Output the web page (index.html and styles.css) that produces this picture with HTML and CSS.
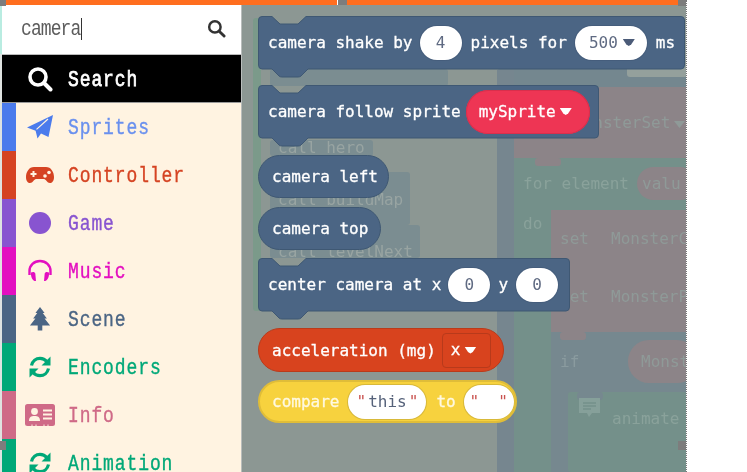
FILE: index.html
```html
<!DOCTYPE html>
<html lang="en">
<head>
<meta charset="utf-8">
<title>Camera blocks</title>
<link rel="stylesheet" href="styles.css">
</head>
<body>
<div class="window">
  <div class="topbar"><div class="bar bar-left"></div><div class="bar-gap"></div><div class="bar bar-right"></div></div>
  <div class="handle handle-tl"></div>
  <div class="handle handle-tr"></div>
  <div class="handle handle-bl"></div>
  <div class="handle handle-br"></div>
  <div class="main">
    <aside class="toolbox">
      <div class="search">
        <span class="query">camera</span><span class="caret"></span>
        <svg class="search-icon" viewBox="0 0 20 20"><circle cx="8.3" cy="8.3" r="6" fill="none" stroke="#333" stroke-width="2.6"/><path d="M12.8 12.8 18 18" stroke="#333" stroke-width="3" stroke-linecap="round"/></svg>
      </div>
      <div class="cat cat-search">
        <span class="cat-icon"><svg viewBox="0 0 26 26" width="26" height="26"><circle cx="11" cy="11" r="8" fill="none" stroke="#fff" stroke-width="3.6"/><path d="M17 17 23.5 23.5" stroke="#fff" stroke-width="4" stroke-linecap="round"/></svg></span>
        <span class="cat-label">Search</span>
      </div>
      <div class="cat sprites">
        <span class="strip"></span>
        <span class="cat-icon"><svg viewBox="0 0 26 26" width="26" height="26"><path d="M26 1 21.5 23 14 19.6 10.5 24.5 8.6 16.8 0 13.6Z" fill="#4b7bec"/><path d="M21 5 9.5 15.4" stroke="#fff3e1" stroke-width="1.2"/></svg></span>
        <span class="cat-label">Sprites</span>
      </div>
      <div class="cat controller">
        <span class="strip"></span>
        <span class="cat-icon"><svg viewBox="0 0 28 18" width="28" height="18"><path d="M8 1H20C25 1 28 6 28 11 28 15 26 17 24 17 21 17 20 13 18 13H10C8 13 7 17 4 17 2 17 0 15 0 11 0 6 3 1 8 1Z" fill="#d54322"/><path d="M7.5 5V11M4.5 8H10.5" stroke="#fff3e1" stroke-width="2"/><circle cx="19" cy="10" r="1.8" fill="#fff3e1"/><circle cx="23" cy="6.5" r="1.8" fill="#fff3e1"/></svg></span>
        <span class="cat-label">Controller</span>
      </div>
      <div class="cat game">
        <span class="strip"></span>
        <span class="cat-icon"><svg viewBox="0 0 24 24" width="24" height="24"><circle cx="12" cy="12" r="11" fill="#8854d0"/></svg></span>
        <span class="cat-label">Game</span>
      </div>
      <div class="cat music">
        <span class="strip"></span>
        <span class="cat-icon"><svg viewBox="0 0 26 24" width="26" height="24"><path d="M2.500 16V12C2.500 6.500 7 2 13 2S23.500 6.500 23.500 12V16" fill="none" stroke="#e30fc0" stroke-width="2.400"/><path d="M4 13.500C6 12.500 8 13 8.300 14.500L9 22C6.500 22.500 3.500 19 4 13.500ZM22 13.500C20 12.500 18 13 17.700 14.500L17 22C19.500 22.500 22.500 19 22 13.500Z" fill="#e30fc0"/></svg></span>
        <span class="cat-label">Music</span>
      </div>
      <div class="cat scene">
        <span class="strip"></span>
        <span class="cat-icon"><svg viewBox="0 0 24 26" width="22" height="26"><path d="M12 0 17 6.500H15L19.500 12.500H17L23 20H14.500V25.500H9.500V20H1L7 12.500H4.500L9 6.500H7Z" fill="#4b6584"/></svg></span>
        <span class="cat-label">Scene</span>
      </div>
      <div class="cat encoders">
        <span class="strip"></span>
        <span class="cat-icon"><svg class="sync" viewBox="0 0 24 24" width="24" height="24"><path d="M3.500 10.500C4.500 6 8 3.300 12 3.300 15 3.300 17.300 4.600 18.800 6.500M20.500 13.500C19.500 18 16 20.700 12 20.700 9 20.700 6.700 19.400 5.200 17.500" fill="none" stroke="currentColor" stroke-width="3.200"/><path d="M22.500 1.500V10.500H13.500ZM1.500 22.500V13.500H10.500Z" fill="currentColor"/></svg></span>
        <span class="cat-label">Encoders</span>
      </div>
      <div class="cat info">
        <span class="strip"></span>
        <span class="cat-icon"><svg viewBox="0 0 30 22" width="30" height="22"><rect width="30" height="22" rx="2.500" fill="#cf6a87"/><circle cx="9.500" cy="7.500" r="3.400" fill="#fff3e1"/><path d="M4 17C4 13 6 12 9.500 12S15 13 15 17Z" fill="#fff3e1"/><path d="M18 6.500H27M18 10.500H27M18 14.500H27" stroke="#fff3e1" stroke-width="1.800"/><path d="M7 22V20.500M11 22V20.500M19 22V20.500M23 22V20.500" stroke="#fff3e1"/></svg></span>
        <span class="cat-label">Info</span>
      </div>
      <div class="cat animation">
        <span class="strip"></span>
        <span class="cat-icon"><svg class="sync" viewBox="0 0 24 24" width="24" height="24"><path d="M3.500 10.500C4.500 6 8 3.300 12 3.300 15 3.300 17.300 4.600 18.800 6.500M20.500 13.500C19.500 18 16 20.700 12 20.700 9 20.700 6.700 19.400 5.200 17.500" fill="none" stroke="currentColor" stroke-width="3.200"/><path d="M22.500 1.500V10.500H13.500ZM1.500 22.500V13.500H10.500Z" fill="currentColor"/></svg></span>
        <span class="cat-label">Animation</span>
      </div>
    </aside>
    <section class="workspace">
      <div class="ghosts">
        <div class="ghost g-strip"></div>
        <div class="ghost g-top"></div>
        <div class="ghost g-topright"></div>
        <div class="ghost g-light"></div>
        <div class="ghost g-hero"></div>
        <div class="ghost g-build"></div>
        <div class="ghost g-level"></div>
        <div class="ghost g-band"></div>
        <div class="ghost g-green"></div>
        <div class="ghost g-mauve"></div>
        <div class="ghost g-tab"></div>
        <div class="ghost g-set"></div>
        <div class="ghost g-if"></div>
        <div class="ghost g-settab"></div>
        <div class="ghost g-inner"></div>
        <div class="ghost g-iftab"></div>
        <div class="ghost g-valu"></div>
        <div class="ghost g-monst"></div>
        <span class="gt t-hero">call hero</span>
        <span class="gt t-build">call buildMap</span>
        <span class="gt t-level">call levelNext</span>
        <span class="gt t-monster">MonsterSet</span>
        <i class="g-tri"></i>
        <span class="gt t-for">for element</span>
        <span class="gt t-valu">valu</span>
        <span class="gt t-do">do</span>
        <span class="gt t-set1">set</span>
        <span class="gt t-mc">MonsterC</span>
        <span class="gt t-set2">set</span>
        <span class="gt t-mp">MonsterP</span>
        <span class="gt t-if">if</span>
        <span class="gt t-mo">Monst</span>
        <span class="gt t-anim">animate</span>
        <svg class="g-comment" viewBox="0 0 21 19"><path d="M0 0H21V15H13L10 19 8 15H0Z" fill="#86a09a"/><path d="M4 5H17M4 8H17M4 11H12" stroke="#74908a" stroke-width="1.300"/></svg>
      </div>
      <div class="flyout">
        <div class="block stack w-shake">
          <svg class="shape" width="427" height="62" viewBox="0 0 427 62"><path d="M4 .5H14L22 8H40L48 .5H423Q426.500 .5 426.500 4V49Q426.500 53 423 53H50L43 60Q42 61 40 61H24Q22 61 21 60L14 53H4Q.5 53 .5 49V4Q.5 .5 4 .5Z"/></svg>
          <div class="row">
            <span>camera shake by</span>
            <span class="field f-4">4</span>
            <span class="t-pixels">pixels for</span>
            <span class="field f-500">500<i class="tri dark"></i></span>
            <span class="t-ms">ms</span>
          </div>
        </div>
        <div class="block stack w-follow">
          <svg class="shape" width="341" height="62" viewBox="0 0 341 62"><path d="M4 .5H14L22 8H40L48 .5H337Q340.500 .5 340.500 4V49Q340.500 53 337 53H50L43 60Q42 61 40 61H24Q22 61 21 60L14 53H4Q.5 53 .5 49V4Q.5 .5 4 .5Z"/></svg>
          <div class="row">
            <span>camera follow sprite</span>
            <span class="sprite-drop">mySprite<i class="tri"></i></span>
          </div>
        </div>
        <div class="block pill w-left">camera left</div>
        <div class="block pill w-top">camera top</div>
        <div class="block stack w-center">
          <svg class="shape" width="312" height="62" viewBox="0 0 312 62"><path d="M4 .5H14L22 8H40L48 .5H308Q311.500 .5 311.500 4V49Q311.500 53 308 53H50L43 60Q42 61 40 61H24Q22 61 21 60L14 53H4Q.5 53 .5 49V4Q.5 .5 4 .5Z"/></svg>
          <div class="row">
            <span>center camera at x</span>
            <span class="field f-0">0</span>
            <span class="t-y">y</span>
            <span class="field f-0">0</span>
          </div>
        </div>
        <div class="block pill accel">
          <span>acceleration (mg)</span>
          <span class="axis">x<i class="tri"></i></span>
        </div>
        <div class="block pill compare">
          <span>compare</span>
          <span class="field f-this"><b>"</b>this<b>"</b></span>
          <span class="t-to">to</span>
          <span class="field f-empty"><b>"</b><b>"</b></span>
        </div>
      </div>
    </section>
  </div>
</div>
</body>
</html>
```
FILE: styles.css
```css
* { box-sizing: border-box; }
html, body { margin: 0; height: 100%; background: #fff; overflow: hidden; }
.window {
  position: relative;
  width: 687px;
  height: 472px;
  display: flex;
  flex-direction: column;
  border-right: 1px dotted #777;
  filter: blur(0.45px);
}
.topbar { display: flex; height: 5px; padding-left: 6px; flex: none; padding-right: 8px; }
.bar { flex: 1; background: #ff6e1f; }
.bar-gap { width: 9px; height: 6px; margin-left: 1px; background: #7d7d7d; }
.handle { position: absolute; background: #7d7d7d; z-index: 5; }
.handle-tl { left: 0; top: 0; width: 6px; height: 6px; }
.handle-tr { right: 0; top: 0; width: 8px; height: 6px; }
.handle-bl { left: 0; top: 441px; width: 6px; height: 9px; }
.handle-br { right: 0; top: 441px; width: 8px; height: 9px; }
.main { display: flex; flex: 1; min-height: 0; }

.toolbox {
  width: 242px;
  flex: none;
  padding-left: 2px;
  border-right: 1px solid #b9bdbc;
  background: linear-gradient(#b9ece1 0 49px, #dfe3e1 49px);
  overflow: hidden;
  display: flex;
  flex-direction: column;
}
.search {
  height: 50px;
  flex: none;
  background: #fff;
  border-bottom: 1px solid #bbb;
  display: flex;
  align-items: center;
  padding: 0 16px 2px 19px;
  font: 18px/1 "Liberation Mono", monospace;
  color: #5c5c5c;
}
.query { display: inline-block; letter-spacing: -0.9px; transform: scaleY(1.2); }
.caret { width: 1px; height: 22px; background: #333; margin-left: 1px; }
.search-icon { width: 19px; height: 19px; margin-left: auto; margin-right: -1px; }
.cat {
  height: 48px;
  flex: none;
  background: #fff3e1;
  display: flex;
  align-items: center;
  font: 18px/1 "Liberation Mono", monospace;
  letter-spacing: 0.9px;
}
.strip { width: 14px; height: 100%; flex: none; background: currentColor; }
.cat-icon { width: 52px; padding-right: 5px; display: flex; justify-content: center; flex: none; }
.cat-label {
  display: inline-block;
  margin-top: 2px;
  transform: scaleY(1.25);
  -webkit-text-stroke: 0.3px currentColor;
}
.cat-search { background: #000; color: #fff; padding-left: 14px; border-bottom: 1px solid #999; }
.cat-search .cat-label { -webkit-text-stroke: 0.6px currentColor; }
.sprites { color: #4b7bec; }
.sprites .cat-label { color: #6a90ee; }
.controller { color: #d54322; }
.game { color: #8854d0; }
.music { color: #e30fc0; }
.scene { color: #4b6584; }
.encoders { color: #00a878; }
.info { color: #cf6a87; }
.animation { color: #00a878; }

.workspace { position: relative; flex: 1; min-width: 0; background: #8c9793; overflow: hidden; }
.ghosts { position: absolute; inset: 0; }
.ghost { position: absolute; border-radius: 3px; }
.g-strip { left: 11px; top: 13px; width: 8px; height: 293px; background: #7b9a8a; }
.g-top { left: 28px; top: 64px; width: 178px; height: 17px; background: #7b8d91; }
.g-topright { left: 255px; top: 64px; width: 190px; height: 18px; background: #74878f; }
.g-light { left: 385px; top: 60px; width: 60px; height: 12px; background: #94a09c; }
.g-hero { left: 28px; top: 135px; width: 103px; height: 16px; background: #7b8d91; }
.g-build { left: 28px; top: 167px; width: 140px; height: 53px; background: #7b8d91; }
.g-level { left: 28px; top: 220px; width: 150px; height: 33px; background: #7b8d91; }
.g-band { left: 255px; top: 65px; width: 17px; height: 402px; background: #76868f; border-radius: 0; }
.g-green { left: 272px; top: 153px; width: 173px; height: 314px; background: #74908a; border-radius: 0; }
.g-mauve { left: 272px; top: 82px; width: 173px; height: 71px; background: #8c8488; border-radius: 0; }
.g-tab { left: 293px; top: 153px; width: 26px; height: 8px; background: #8c8488; }
.g-set { left: 309px; top: 205px; width: 136px; height: 122px; background: #8c8488; border-radius: 0; }
.g-if { left: 309px; top: 327px; width: 136px; height: 140px; background: #76888f; border-radius: 0; }
.g-settab { left: 318px; top: 327px; width: 26px; height: 8px; background: #8c8488; }
.g-inner { left: 326px; top: 387px; width: 119px; height: 80px; background: #74908a; }
.g-iftab { left: 335px; top: 387px; width: 26px; height: 8px; background: #76888f; }
.g-valu { left: 395px; top: 162px; width: 60px; height: 33px; border-radius: 17px; background: #8c8488; }
.g-monst { left: 386px; top: 335px; width: 70px; height: 43px; border-radius: 21px; background: #8c8488; }
.gt { position: absolute; font: 16px/1 "DejaVu Sans Mono", monospace; color: #8fa19d; white-space: nowrap; }
.t-hero { left: 36px; top: 135px; color: #98a4a2; }
.t-build { left: 36px; top: 187px; color: #98a4a2; }
.t-level { left: 36px; top: 239px; color: #98a4a2; }
.t-monster { left: 332px; top: 110px; color: #8f9a98; }
.g-tri {
  position: absolute;
  left: 432px;
  top: 116px;
  width: 11px;
  height: 7px;
  background: #8f9a98;
  clip-path: polygon(0 0, 100% 0, 50% 100%);
}
.t-for { left: 281px; top: 171px; color: #8aa29b; }
.t-valu { left: 400px; top: 171px; color: #8f9a98; }
.t-do { left: 281px; top: 211px; color: #8aa29b; }
.t-set1 { left: 318px; top: 226px; color: #8f9a98; }
.t-mc { left: 369px; top: 226px; color: #8f9a98; }
.t-set2 { left: 318px; top: 284px; color: #8f9a98; }
.t-mp { left: 369px; top: 284px; color: #8f9a98; }
.t-if { left: 318px; top: 349px; color: #8a9b9f; }
.t-mo { left: 399px; top: 349px; color: #8f9a98; }
.t-anim { left: 370px; top: 406px; color: #8aa29b; }
.g-comment { position: absolute; left: 337px; top: 393px; width: 21px; height: 19px; }

.flyout {
  position: relative;
  z-index: 2;
  display: flex;
  flex-direction: column;
  align-items: flex-start;
  padding: 11px 0 0 16px;
  font: 16px/1 "DejaVu Sans Mono", monospace;
  color: #fff;
  white-space: nowrap;
  -webkit-text-stroke: 0.3px #fff;
}
.block { position: relative; flex: none; }
.stack { height: 61px; margin-bottom: 8px; }
.w-follow { margin-bottom: 9px; }
.w-center { margin-bottom: 9px; }
.shape { position: absolute; left: 0; top: 0; display: block; }
.shape path { fill: #4b6584; stroke: #3f5873; stroke-width: 1; }
.row { position: relative; height: 53px; display: flex; align-items: center; gap: 8px; padding-left: 10px; }
.w-shake { width: 427px; }
.w-follow { width: 341px; }
.w-center { width: 312px; }
.field {
  height: 34px;
  border-radius: 17px;
  background: #fff;
  color: #5f6a82;
  display: flex;
  align-items: center;
  justify-content: center;
  box-shadow: 0 0 0 1px rgba(60, 80, 110, .35);
  -webkit-text-stroke: 0;
}
.f-4 { width: 42px; margin-left: -1px; }
.t-pixels { margin-left: 1px; }
.f-500 { width: 72px; gap: 5px; margin-left: 0; padding-left: 2px; }
.t-ms { margin-left: 1px; }
.f-0 { width: 42px; margin-left: -1px; }
.t-y { margin-right: 1px; }
.tri {
  display: inline-block;
  width: 12px;
  height: 7px;
  background: #fff;
  clip-path: polygon(0 0, 100% 0, 70% 80%, 50% 100%, 30% 80%);
}
.tri.dark { background: #4b5b78; }
.sprite-drop {
  width: 124px;
  height: 44px;
  margin-left: -3px;
  border-radius: 22px;
  background: #ee3554;
  box-shadow: inset 0 0 0 1px #d92f4c;
  display: flex;
  align-items: center;
  gap: 4px;
  padding-left: 13px;
}
.pill {
  height: 43px;
  margin-bottom: 9px;
  border-radius: 22px;
  background: #4b6584;
  border: 1px solid #3f5873;
  display: flex;
  align-items: center;
  padding-left: 13px;
}
.w-left { width: 131px; }
.w-top { width: 123px; margin-bottom: 8px; }
.accel {
  width: 246px;
  height: 44px;
  margin-bottom: 8px;
  padding-top: 2px;
  background: #d8431e;
  border-color: #bb3a1a;
  gap: 6px;
}
.axis {
  width: 49px;
  height: 35px;
  margin-top: -2px;
  border: 1px solid #b83a1b;
  border-radius: 4px;
  display: flex;
  align-items: center;
  gap: 4px;
  padding-left: 8px;
}
.compare {
  width: 259px;
  margin-bottom: 0;
  background: #f7d23e;
  border: 2px solid #e0bd38;
  padding-left: 12px;
  gap: 8px;
  color: #fff9e0;
  -webkit-text-stroke: 0.3px #fff9e0;
}
.f-this { width: 78px; gap: 2px; margin-left: 1px; color: #56627a; box-shadow: 0 0 0 1px #d8b93a; -webkit-text-stroke: 0; }
.f-this b, .f-empty b { color: #c9524f; font-weight: normal; }
.t-to { margin-left: 2px; }
.f-empty { width: 50px; gap: 19px; box-shadow: 0 0 0 1px #d8b93a; -webkit-text-stroke: 0; }
```
